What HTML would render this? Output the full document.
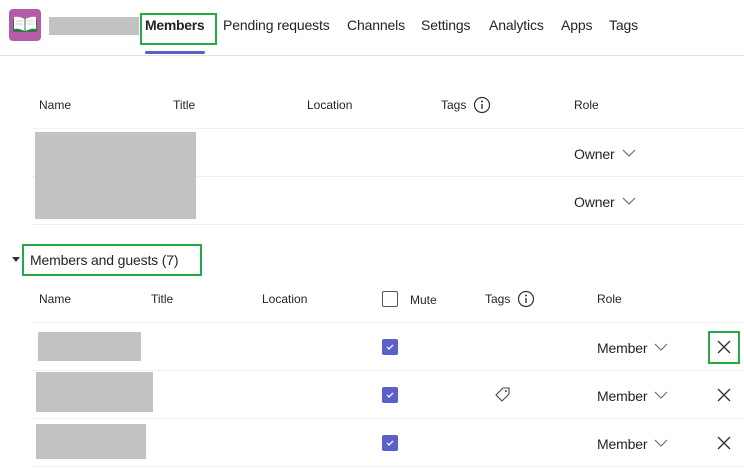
<!DOCTYPE html>
<html><head><style>
body{margin:0;width:744px;height:469px;background:#fff;font-family:"Liberation Sans",sans-serif;color:#252423;position:relative;overflow:hidden}
.a{position:absolute;white-space:nowrap}
.t{font-size:14px;line-height:16px;letter-spacing:-0.15px}
.h{font-size:12px;line-height:14px}
.g{background:#c2c2c2;position:absolute}
.sep{position:absolute;height:1px;background:#f0f0f0;left:32px;right:0}
.cb{position:absolute;width:16px;height:16px;background:#5b5fc7;border-radius:2px}
.gb{position:absolute;border:2px solid #22aa44;box-sizing:border-box}
</style></head><body>
<div class="a" style="left:9px;top:9px;width:32px;height:32px;background:#b45ca8;border-radius:4px"></div>
<svg class="a" style="left:12px;top:15px" width="26" height="20" viewBox="0 0 26 20"><path d="M1 4h24v13H1z" fill="#2d7a4a"/><path d="M2 2q5-1 10.5 2v12Q7 13 2 14z" fill="#fff"/><path d="M24 2q-5-1-10.5 2v12q5.5-3 10.5-2z" fill="#fff"/><path d="M4 6h7M4 9h7M15 6h7M15 9h7" stroke="#ccc" stroke-width="1"/></svg>
<div class="g" style="left:49px;top:17px;width:90px;height:18px"></div>
<div class="a t" style="left:145px;top:17px;font-weight:bold;letter-spacing:-0.3px">Members</div>
<div class="gb" style="left:140px;top:13px;width:77px;height:32px"></div>
<div class="a" style="left:145px;top:51px;width:60px;height:3px;background:#5b5fc7;border-radius:2px"></div>
<div class="a t" style="left:223px;top:17px">Pending requests</div>
<div class="a t" style="left:347px;top:17px">Channels</div>
<div class="a t" style="left:421px;top:17px">Settings</div>
<div class="a t" style="left:489px;top:17px">Analytics</div>
<div class="a t" style="left:561px;top:17px">Apps</div>
<div class="a t" style="left:609px;top:17px">Tags</div>
<div class="a" style="left:0;right:0;top:55px;height:1px;background:#e1e1e1"></div>

<div class="a h" style="left:39px;top:98px">Name</div>
<div class="a h" style="left:173px;top:98px">Title</div>
<div class="a h" style="left:307px;top:98px">Location</div>
<div class="a h" style="left:441px;top:98px">Tags</div>
<svg class="a" style="left:473px;top:96px" width="18" height="18"><circle cx="9" cy="9" r="7.5" fill="none" stroke="#333" stroke-width="1.2"/><path d="M9 8v5" stroke="#333" stroke-width="1.4"/><circle cx="9" cy="5.5" r="1" fill="#333"/></svg>
<div class="a h" style="left:574px;top:98px">Role</div>
<div class="sep" style="top:128px"></div>
<div class="sep" style="top:176px"></div>
<div class="sep" style="top:224px"></div>
<div class="g" style="left:35px;top:132px;width:161px;height:87px"></div>
<div class="a t" style="left:574px;top:146px">Owner</div>
<div class="a t" style="left:574px;top:194px">Owner</div>
<svg class="a" style="left:622px;top:148px" width="14" height="10"><path d="M1 2l6 6 6-6" fill="none" stroke="#666" stroke-width="1.1"/></svg>
<svg class="a" style="left:622px;top:196px" width="14" height="10"><path d="M1 2l6 6 6-6" fill="none" stroke="#666" stroke-width="1.1"/></svg>

<svg class="a" style="left:12px;top:257px" width="8" height="6"><path d="M0 0h8l-4 5z" fill="#333"/></svg>
<div class="a t" style="left:30px;top:252px">Members and guests (7)</div>
<div class="gb" style="left:22px;top:244px;width:180px;height:32px"></div>

<div class="a h" style="left:39px;top:292px">Name</div>
<div class="a h" style="left:151px;top:292px">Title</div>
<div class="a h" style="left:262px;top:292px">Location</div>
<div class="a" style="left:382px;top:291px;width:16px;height:16px;border:1px solid #555;box-sizing:border-box;border-radius:2px"></div>
<div class="a h" style="left:410px;top:293px">Mute</div>
<div class="a h" style="left:485px;top:292px">Tags</div>
<svg class="a" style="left:517px;top:290px" width="18" height="18"><circle cx="9" cy="9" r="7.5" fill="none" stroke="#333" stroke-width="1.2"/><path d="M9 8v5" stroke="#333" stroke-width="1.4"/><circle cx="9" cy="5.5" r="1" fill="#333"/></svg>
<div class="a h" style="left:597px;top:292px">Role</div>
<div class="sep" style="top:322px"></div>
<div class="sep" style="top:370px"></div>
<div class="sep" style="top:418px"></div>
<div class="sep" style="top:466px"></div>

<div class="g" style="left:38px;top:332px;width:103px;height:29px"></div>
<div class="g" style="left:36px;top:372px;width:117px;height:40px"></div>
<div class="g" style="left:36px;top:424px;width:110px;height:35px"></div>

<div class="cb" style="left:382px;top:339px"></div>
<div class="cb" style="left:382px;top:387px"></div>
<div class="cb" style="left:382px;top:435px"></div>
<svg class="a" style="left:382px;top:339px" width="16" height="16"><path d="M5 8l2 2 4-4" fill="none" stroke="#fff" stroke-width="1.3"/></svg>
<svg class="a" style="left:382px;top:387px" width="16" height="16"><path d="M5 8l2 2 4-4" fill="none" stroke="#fff" stroke-width="1.3"/></svg>
<svg class="a" style="left:382px;top:435px" width="16" height="16"><path d="M5 8l2 2 4-4" fill="none" stroke="#fff" stroke-width="1.3"/></svg>

<svg class="a" style="left:494px;top:386px" width="18" height="18"><path d="M2 9l7-7h6v6l-7 7z" fill="none" stroke="#444" stroke-width="1.1" stroke-linejoin="round"/><circle cx="12" cy="5" r="1" fill="#444"/></svg>

<div class="a t" style="left:597px;top:340px">Member</div>
<div class="a t" style="left:597px;top:388px">Member</div>
<div class="a t" style="left:597px;top:436px">Member</div>
<svg class="a" style="left:654px;top:342px" width="14" height="10"><path d="M1 2l6 6 6-6" fill="none" stroke="#666" stroke-width="1.1"/></svg>
<svg class="a" style="left:654px;top:390px" width="14" height="10"><path d="M1 2l6 6 6-6" fill="none" stroke="#666" stroke-width="1.1"/></svg>
<svg class="a" style="left:654px;top:438px" width="14" height="10"><path d="M1 2l6 6 6-6" fill="none" stroke="#666" stroke-width="1.1"/></svg>

<svg class="a" style="left:716px;top:339px" width="16" height="16"><path d="M2 2l12 12M14 2L2 14" stroke="#333" stroke-width="1.4"/></svg>
<svg class="a" style="left:716px;top:387px" width="16" height="16"><path d="M2 2l12 12M14 2L2 14" stroke="#333" stroke-width="1.4"/></svg>
<svg class="a" style="left:716px;top:435px" width="16" height="16"><path d="M2 2l12 12M14 2L2 14" stroke="#333" stroke-width="1.4"/></svg>
<div class="gb" style="left:708px;top:331px;width:32px;height:33px"></div>
</body></html>
